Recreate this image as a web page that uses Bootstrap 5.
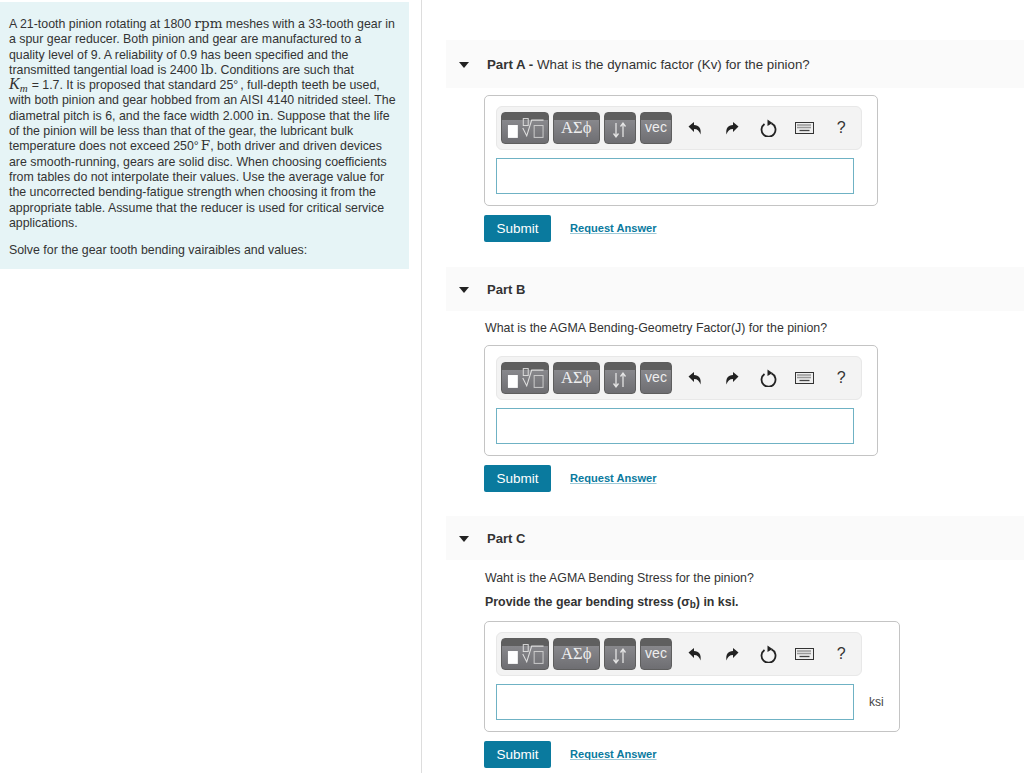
<!DOCTYPE html>
<html lang="en">
<head>
  <meta charset="UTF-8">
  <title>Part questions</title>
  <link href="https://cdn.jsdelivr.net/npm/bootstrap@5.3.0/dist/css/bootstrap.min.css" rel="stylesheet">
  <style>
    html, body { height: 773px; overflow: hidden; }
    body { font-family: "Liberation Sans", Arial, sans-serif; font-size: 12.36px; color: #333; background: #fff; }
    .page-wrap { height: 773px; }
    .left-col { width: 422px; flex: none; border-right: 1px solid #ddd; padding-top: 2px; }
    .intro-box { width: 409px; height: 267px; background: #e6f4f6; padding: 15px 9px 0 9px; line-height: 15.3px; }
    .intro-box p { margin: 0 0 12px 0; }
    .intro-box sub { line-height: 0; }
    .deg-mark { margin-right: 2px; }
    .mth { font-family: "DejaVu Serif", serif; font-size: 13.5px; line-height: 0; }
    .km { font-family: "Liberation Serif", serif; font-style: italic; font-size: 16px; line-height: 0; margin-right: 4px; }
    .km sub { font-size: 11px; }
    .right-col { flex: 1; padding: 40px 0 0 24px; min-width: 0; }
    .part-head { background: #fafafa; height: 44px; padding: 1px 0 0 13px; font-size: 13px; gap: 18px; color: #333; }
    .part-a { height: 48px; font-size: 13.3px; }
    .caret-down { width: 0; height: 0; border-left: 5.5px solid transparent; border-right: 5.5px solid transparent; border-top: 6px solid #222; }
    .part-body { padding-left: 38px; }
    .q-text { margin: 0 0 0 1px; font-size: 12.36px; line-height: 16px; }
    .q-bold { font-weight: 700; font-size: 12.4px; }
    .ans-box { width: 394px; height: 111px; border: 1px solid #c4c4c4; border-radius: 5px; padding: 10px 11px; position: relative; }
    .ans-wide { width: 416px; }
    .tool-bar { width: 366px; height: 44px; background: #f3f3f3; border: 1px solid #e8e8e8; border-radius: 6px; padding: 0 4px; }
    .tool-btn { height: 32px; border-radius: 4px; border: 1px solid #5e5e5e; color: #fff; margin-right: 4px; flex: none; overflow: hidden;
      background: linear-gradient(#5f5f5f 0, #5f5f5f 7px, #88888c 7px, #6e6e72 100%); justify-content: center; }
    .w-tpl { width: 47.5px; }
    .w-sym { width: 47.5px; font-family: "Liberation Serif", serif; font-size: 16.6px; padding-top: 1px; color: #eee; }
    .w-arr { width: 32px; }
    .w-vec { width: 32px; font-size: 14px; padding-bottom: 2px; color: #eee; }
    .icon-row { margin-left: 1px; }
    .icon-slot { width: 36.5px; flex: none; justify-content: center; }
    .help-mark { font-size: 16px; color: #333; }
    .ans-input { width: 358px; height: 36px; border: 1px solid #6fb2c4; margin-top: 8px; background: #fff; }
    .unit-label { position: absolute; left: 384px; top: 71px; font-size: 12px; color: #444; }
    .submit-btn { background: #0a7a9e; border: 0; border-radius: 2px; color: #fff; width: 67px; height: 27px; padding: 0; font-size: 13.5px; line-height: 27px; }
    .submit-btn:hover { background: #0a7a9e; color: #fff; }
    .req-link { color: #0a7a9e; font-weight: 700; font-size: 11.1px; margin-left: 19px; text-decoration: underline; text-decoration-color: #9cc8d6; }
    .act-row { margin-top: 9px; }
    .sub-b { font-size: 10px; vertical-align: -2px; line-height: 0; }
    .pt-ans-a { padding-top: 7px; }
    .gap-b { margin-top: 25px; }
    .gap-c { margin-top: 24px; }
    .q-b { margin-top: 9px; margin-bottom: 9px; }
    .q-c1 { margin-top: 10px; margin-bottom: 8px; }
    .q-c2 { margin-top: 0; margin-bottom: 11px; }
  </style>
</head>
<body>
  <div class="d-flex page-wrap">
    <div class="left-col">
      <div class="intro-box">
        <p>A 21-tooth pinion rotating at 1800 <span class="mth">rpm</span> meshes with a 33-tooth gear in<br>
        a spur gear reducer. Both pinion and gear are manufactured to a<br>
        quality level of 9. A reliability of 0.9 has been specified and the<br>
        transmitted tangential load is 2400 <span class="mth">lb</span>. Conditions are such that<br>
        <span class="km">K<sub>m</sub></span>= 1.7. It is proposed that standard 25<span class="deg-mark">°</span>, full-depth teeth be used,<br>
        with both pinion and gear hobbed from an AISI 4140 nitrided steel. The<br>
        diametral pitch is 6, and the face width 2.000 <span class="mth">in</span>. Suppose that the life<br>
        of the pinion will be less than that of the gear, the lubricant bulk<br>
        temperature does not exceed 250<span class="deg-mark">°</span><span class="mth">F</span>, both driver and driven devices<br>
        are smooth-running, gears are solid disc. When choosing coefficients<br>
        from tables do not interpolate their values. Use the average value for<br>
        the uncorrected bending-fatigue strength when choosing it from the<br>
        appropriate table. Assume that the reducer is used for critical service<br>
        applications.</p>
        <p>Solve for the gear tooth bending vairaibles and values:</p>
      </div>
    </div>

    <div class="right-col" id="parts"></div>
  </div>

  <script>
    const tplIcon = `<svg width="46" height="30" viewBox="1 1 46 30"><rect x="7" y="13" width="10" height="13" fill="#fff"/><rect x="22.500" y="6.500" width="5" height="7" fill="none" stroke="#ddd"/><path d="M22 16l4 8 5-16h12" fill="none" stroke="#ddd" stroke-width="1.100"/><rect x="33.500" y="13.500" width="9" height="12" fill="none" stroke="#ccc"/></svg>`;
    const arrIcon = `<svg width="30" height="30" viewBox="1 1 30 30"><path d="M12 11v13.500M9.500 21.500l2.500 3.500 2.500-3.500M19 25V11.500M16.500 14.500l2.500-3.500 2.500 3.500" fill="none" stroke="#e4e4e4" stroke-width="1.300"/></svg>`;
    const undoIcon = `<svg width="14" height="14" viewBox="0 0 14 14"><path d="M0.500 5.500L6 1v3c5 0 7.500 3.500 6.500 9.500C11.500 10 9.500 8 6 8v3z" fill="#222"/></svg>`;
    const redoIcon = `<svg width="14" height="14" viewBox="0 0 14 14"><path d="M13.500 5.500L8 1v3c-5 0-7.500 3.500-6.500 9.500C2.500 10 4.500 8 8 8v3z" fill="#222"/></svg>`;
    const resetIcon = `<svg width="17" height="18" viewBox="0 0 17 18"><path d="M4.500 5A7 7 0 1 0 11.500 4.400" fill="none" stroke="#222" stroke-width="1.800"/><path d="M7.500 0.500L12.500 4 7.500 7z" fill="#222"/></svg>`;
    const kbdIcon = `<svg width="19" height="12" viewBox="0 0 19 12"><rect x="0.500" y="0.500" width="18" height="11" fill="#eee" stroke="#333"/><path d="M2.500 3h14M2.500 5.500h14" stroke="#444" stroke-width="1.300" stroke-dasharray="1 1"/><path d="M4.500 8.500h10" stroke="#444" stroke-width="1.300"/></svg>`;

    function answerBox(unit) {
      const icons = [undoIcon, redoIcon, resetIcon, kbdIcon, '<span class="help-mark">?</span>'];
      return `
        <div class="ans-box ${unit ? 'ans-wide' : ''}">
          <div class="tool-bar d-flex align-items-center">
            <div class="tool-btn w-tpl d-flex align-items-center">${tplIcon}</div>
            <div class="tool-btn w-sym d-flex align-items-center">ΑΣϕ</div>
            <div class="tool-btn w-arr d-flex align-items-center">${arrIcon}</div>
            <div class="tool-btn w-vec d-flex align-items-center">vec</div>
            <div class="icon-row d-flex align-items-center">
              ${icons.map(i => `<div class="icon-slot d-flex align-items-center">${i}</div>`).join('')}
            </div>
          </div>
          <div class="ans-input"></div>
          ${unit ? `<span class="unit-label">${unit}</span>` : ''}
        </div>
        <div class="act-row d-flex align-items-center">
          <button class="btn submit-btn">Submit</button>
          <a href="#" class="req-link">Request Answer</a>
        </div>`;
    }

    document.getElementById('parts').innerHTML = `
      <div class="part-head part-a d-flex align-items-center"><span class="caret-down"></span><span><b>Part A - </b>What is the dynamic factor (Kv) for the pinion?</span></div>
      <div class="part-body pt-ans-a">${answerBox('')}</div>

      <div class="part-head d-flex align-items-center gap-b"><span class="caret-down"></span><b>Part B</b></div>
      <div class="part-body">
        <p class="q-text q-b">What is the AGMA Bending-Geometry Factor(J) for the pinion?</p>
        ${answerBox('')}
      </div>

      <div class="part-head d-flex align-items-center gap-c"><span class="caret-down"></span><b>Part C</b></div>
      <div class="part-body">
        <p class="q-text q-c1">Waht is the AGMA Bending Stress for the pinion?</p>
        <p class="q-text q-bold q-c2">Provide the gear bending stress (σ<span class="sub-b">b</span>) in ksi.</p>
        ${answerBox('ksi')}
      </div>`;
  </script>
  <script src="https://cdn.jsdelivr.net/npm/bootstrap@5.3.0/dist/js/bootstrap.bundle.min.js"></script>
</body>
</html>
